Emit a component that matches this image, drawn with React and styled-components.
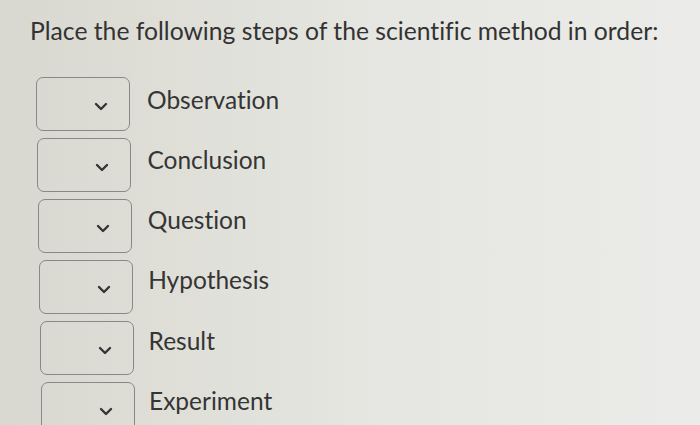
import React from "react";
import styled, { createGlobalStyle } from "styled-components";

const GlobalStyle = createGlobalStyle`
  html, body {
    margin: 0;
    padding: 0;
  }
  body {
    font-family: Lato, "Open Sans", sans-serif;
    font-variant-ligatures: none;
  }
`;

const steps = [
  "Observation",
  "Conclusion",
  "Question",
  "Hypothesis",
  "Result",
  "Experiment",
];

const Chevron = () => (
  <svg width="14" height="9" viewBox="0 0 14 9">
    <path
      d="M2 2 L7 7 L12 2"
      fill="none"
      stroke="#353535"
      strokeWidth="2.4"
      strokeLinecap="round"
      strokeLinejoin="round"
    />
  </svg>
);

const App = () => {
  return (
    <>
      <GlobalStyle />
      <Page>
        <Title>Place the following steps of the scientific method in order:</Title>
        <StepList>
          {steps.map((step, i) => (
            <StepRow key={step} shift={i}>
              <SelectBox>
                <Chevron />
              </SelectBox>
              <Label shift={i}>{step}</Label>
            </StepRow>
          ))}
        </StepList>
      </Page>
    </>
  );
};

const Page = styled.div`
  width: 700px;
  height: 425px;
  box-sizing: border-box;
  padding: 12px 0 0 30px;
  overflow: hidden;
  background: linear-gradient(
    90deg,
    #d8d8d0 0%,
    #dfdfd8 25%,
    #e6e6e2 55%,
    #ebebe9 100%
  );
`;

const Title = styled.h1`
  margin: 0;
  font-size: 24.7px;
  font-weight: 400;
  color: #333;
  line-height: 38px;
`;

const StepList = styled.ul`
  list-style: none;
  margin: 27px 0 0;
  padding: 0;
  display: flex;
  flex-direction: column;
  gap: 7px;
`;

const StepRow = styled.li`
  display: flex;
  align-items: center;
  padding-left: ${(props) => 6 + props.shift}px;
`;

const SelectBox = styled.div`
  width: 94px;
  height: 54px;
  box-sizing: border-box;
  border: 1.5px solid #888884;
  border-radius: 7px;
  display: flex;
  align-items: center;
  justify-content: flex-end;
  padding: 4px 21px 0 0;
`;

const Label = styled.span`
  margin-left: ${(props) => 17 - props.shift * 0.6}px;
  margin-top: ${(props) => -10 - props.shift * 1.4}px;
  font-size: 24.5px;
  color: #353535;
`;

export default App;
